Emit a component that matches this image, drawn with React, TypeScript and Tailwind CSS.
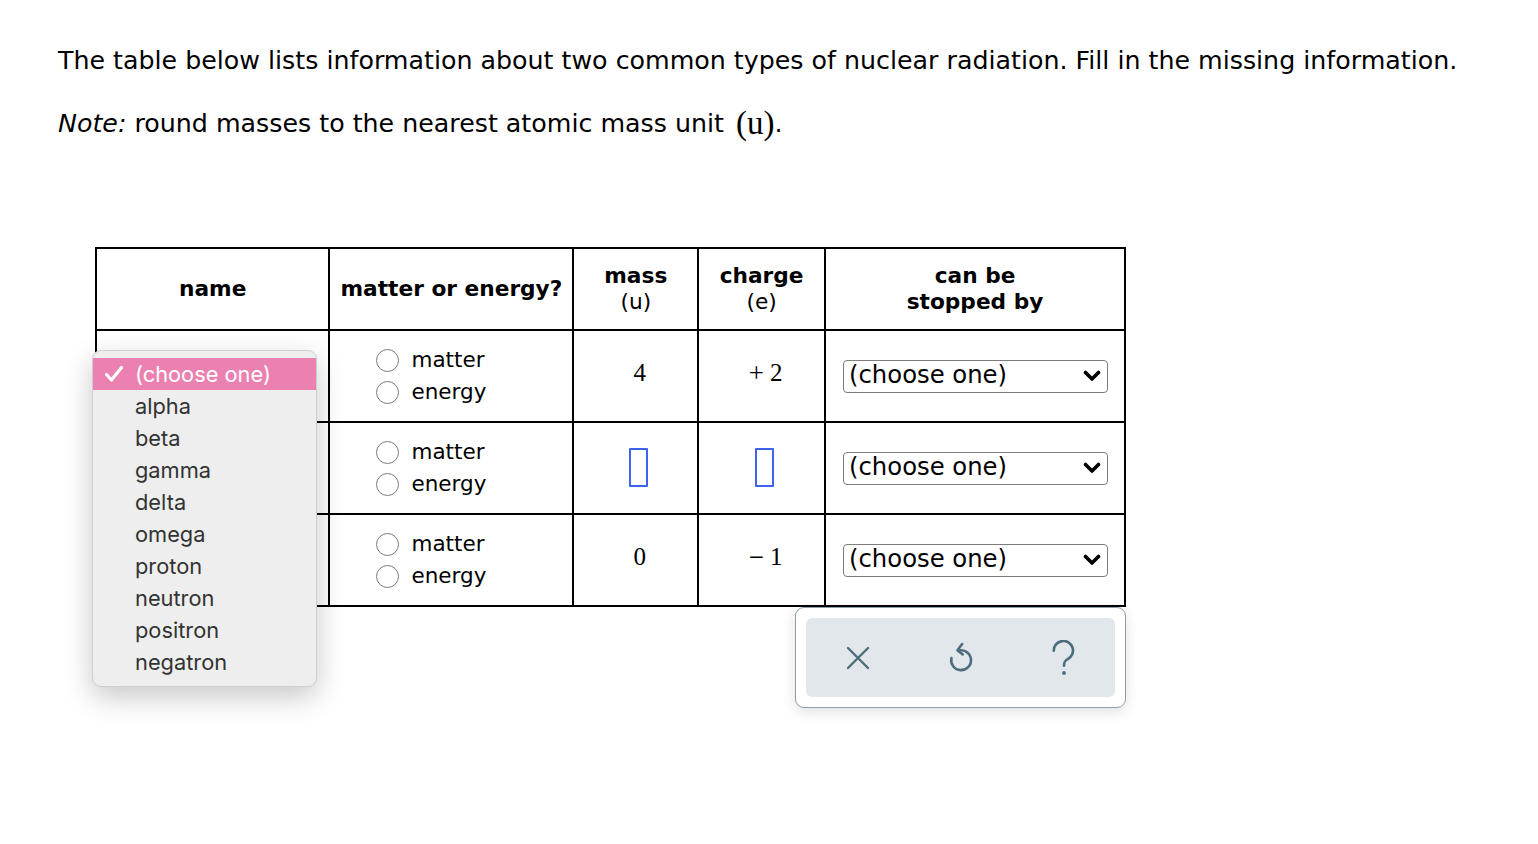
import React from "react";

const sans = { fontFamily: '"DejaVu Sans", Verdana, sans-serif' };
const serif = { fontFamily: '"Liberation Serif", "Times New Roman", serif' };

function Radio({ label }: { label: string }) {
  return (
    <div className="flex items-center h-[32px]">
      <span className="w-[23px] h-[23px] rounded-full border-[1.5px] border-[#7a7a7a] bg-white mr-[12px] shrink-0" />
      <span>{label}</span>
    </div>
  );
}

function Select() {
  return (
    <div className="w-[265px] h-[33px] border-[1.5px] border-[#7c7c7c] rounded-[4px] flex items-center justify-between pl-[5px] pr-[6px] bg-white text-[24.3px] text-black">
      <span className="leading-none pb-[1px]">(choose one)</span>
      <svg width="18" height="14" viewBox="0 0 18 14">
        <path d="M2.5 3.5 L9 10 L15.5 3.5" fill="none" stroke="#000" strokeWidth="3.6" strokeLinecap="round" strokeLinejoin="round" />
      </svg>
    </div>
  );
}

function BlueBox() {
  return <span className="inline-block w-[19px] h-[39px] border-[2px] border-[#3d63f0] rounded-[1px] align-middle" />;
}

function MatterEnergy() {
  return (
    <td className="border-2 border-black pl-[46px] align-middle">
      <Radio label="matter" />
      <Radio label="energy" />
    </td>
  );
}

function Num({ sign, n }: { sign?: string; n: string }) {
  return (
    <td className="border-2 border-black text-[25px] pb-[6px]" style={serif}>
      <div className="flex justify-center items-center pl-[8px]">
        {sign && <span className="mr-[6px] text-[27px] leading-none">{sign}</span>}
        <span>{n}</span>
      </div>
    </td>
  );
}

export default function App() {
  const items = ["alpha", "beta", "gamma", "delta", "omega", "proton", "neutron", "positron", "negatron"];
  return (
    <div className="relative w-[1538px] h-[844px] bg-white text-black" style={sans}>
      <div className="pl-[58px] pt-[44px] text-[25.3px] leading-[34px]">
        <p className="whitespace-nowrap h-[34px]">The table below lists information about two common types of nuclear radiation. Fill in the missing information.</p>
        <p className="mt-[29px] whitespace-nowrap h-[34px] flex items-center">
          <span><i>Note:</i> round masses to the nearest atomic mass unit</span>
          <span className="text-[33px] leading-none ml-[12px] pb-[2px]" style={serif}>(u)</span>
          <span>.</span>
        </p>
      </div>

      <div className="ml-[95px] mt-[106px] w-[1031px]">
        <table className="border-collapse text-[21.5px] leading-[26px]">
          <colgroup>
            <col className="w-[234px]" />
            <col className="w-[244px]" />
            <col className="w-[125px]" />
            <col className="w-[127px]" />
            <col className="w-[300px]" />
          </colgroup>
          <thead>
            <tr className="h-[82px] text-[21.7px]">
              <th className="border-2 border-black font-bold">name</th>
              <th className="border-2 border-black font-bold whitespace-nowrap">matter or energy?</th>
              <th className="border-2 border-black font-normal leading-[26px]">
                <div className="font-bold">mass</div>
                <div>(u)</div>
              </th>
              <th className="border-2 border-black font-normal leading-[26px]">
                <div className="font-bold">charge</div>
                <div>(e)</div>
              </th>
              <th className="border-2 border-black font-bold leading-[26px]">
                <div>can be</div>
                <div>stopped by</div>
              </th>
            </tr>
          </thead>
          <tbody>
            <tr className="h-[92px]">
              <td className="border-2 border-black" />
              <MatterEnergy />
              <Num n="4" />
              <Num sign="+" n="2" />
              <td className="border-2 border-black pl-[17px]"><Select /></td>
            </tr>
            <tr className="h-[92px]">
              <td className="border-2 border-black" />
              <MatterEnergy />
              <td className="border-2 border-black text-center pl-[6px] pb-[2px]"><BlueBox /></td>
              <td className="border-2 border-black text-center pl-[6px] pb-[2px]"><BlueBox /></td>
              <td className="border-2 border-black pl-[17px]"><Select /></td>
            </tr>
            <tr className="h-[92px]">
              <td className="border-2 border-black" />
              <MatterEnergy />
              <Num n="0" />
              <Num sign="−" n="1" />
              <td className="border-2 border-black pl-[17px]"><Select /></td>
            </tr>
          </tbody>
        </table>

        <div className="flex justify-end">
          <div className="w-[331px] h-[101px] border-[1.5px] border-[#8a9fa9] rounded-[9px] bg-white p-[10px] shadow-[0_4px_14px_rgba(0,0,0,0.12)]">
            <div className="h-full rounded-[6px] bg-[#e1e7ea] flex items-center justify-center">
              <div className="w-[104px] flex justify-center">
                <svg width="24" height="24" viewBox="0 0 24 24">
                  <path d="M2 2 L22 22 M22 2 L2 22" stroke="#4d6d7c" strokeWidth="2.4" strokeLinecap="round" />
                </svg>
              </div>
              <div className="w-[104px] flex justify-center">
                <svg width="28" height="34" viewBox="0 0 24 29">
                  <path d="M9.5 8.3 A 8.5 8.5 0 1 1 3.8 14.5" fill="none" stroke="#4d6d7c" strokeWidth="2.2" strokeLinecap="round" />
                  <path d="M13 2.5 L9 7.8 L13.5 11.5" fill="none" stroke="#4d6d7c" strokeWidth="2.2" strokeLinecap="round" strokeLinejoin="round" />
                </svg>
              </div>
              <div className="w-[104px] flex justify-center">
                <svg width="24" height="36" viewBox="0 0 20 30">
                  <path d="M1.5 9 A 8 8 0 1 1 13 16 C 10.5 17.5 10 18.5 10 21.5" fill="none" stroke="#4d6d7c" strokeWidth="2.2" strokeLinecap="round" />
                  <circle cx="10" cy="27.5" r="1.6" fill="#4d6d7c" />
                </svg>
              </div>
            </div>
          </div>
        </div>
      </div>

      {/* open dropdown menu */}
      <div
        className="absolute left-[92px] top-[350px] w-[225px] h-[337px] rounded-[9px] bg-[#eeeeee] border border-[#cfcfcf] shadow-[0_10px_28px_rgba(0,0,0,0.22)] pt-[7px] text-[21.8px] text-[#333333]"
        style={{ fontFamily: 'Inter, "Noto Sans", sans-serif' }}
      >
        <div className="h-[32px] bg-[#ea81b0] text-white flex items-center">
          <svg width="20" height="18" viewBox="0 0 20 18" className="ml-[11px] mr-[11px]">
            <path d="M2.5 9.5 L7.5 15 L17.5 2.5" fill="none" stroke="#fff" strokeWidth="3.2" strokeLinecap="round" strokeLinejoin="round" />
          </svg>
          <span>(choose one)</span>
        </div>
        {items.map((it) => (
          <div key={it} className="h-[32px] flex items-center pl-[42px]">
            {it}
          </div>
        ))}
      </div>
    </div>
  );
}
